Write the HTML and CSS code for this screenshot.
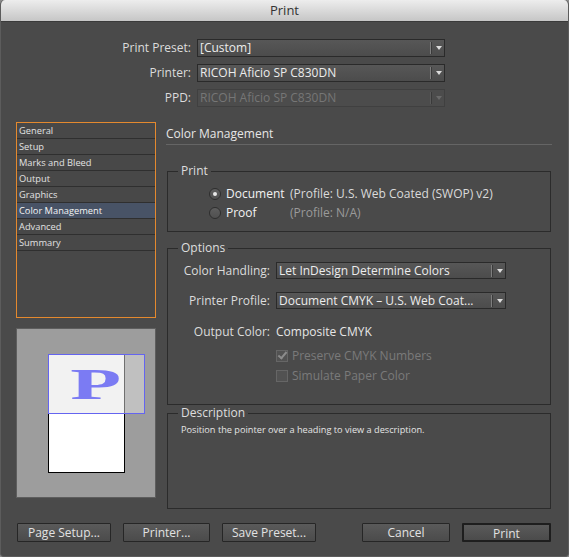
FILE: index.html
```html
<!DOCTYPE html>
<html lang="en">
<head>
    <meta charset="UTF-8">
    <meta name="viewport" content="width=device-width, initial-scale=1.0">
    <title>Print</title>
    <link rel="stylesheet" href="styles.css">
</head>
<body>
    <div class="window">
        <div class="titlebar">Print</div>

        <div class="top">
            <label>Print Preset:</label>
            <div class="select"><span>[Custom]</span><i class="arrow"></i></div>
            <label>Printer:</label>
            <div class="select"><span>RICOH Aficio SP C830DN</span><i class="arrow"></i></div>
            <label>PPD:</label>
            <div class="select disabled"><span>RICOH Aficio SP C830DN</span><i class="arrow"></i></div>
        </div>

        <div class="main">
            <div class="side">
                <ul class="nav">
                    <li>General</li>
                    <li>Setup</li>
                    <li>Marks and Bleed</li>
                    <li>Output</li>
                    <li>Graphics</li>
                    <li class="active">Color Management</li>
                    <li>Advanced</li>
                    <li>Summary</li>
                </ul>
                <div class="preview">
                    <div class="page">
                        <div class="bleed"><span>P</span></div>
                    </div>
                </div>
            </div>

            <div class="panel">
                <h2>Color Management</h2>

                <fieldset class="group">
                    <legend>Print</legend>
                    <div class="print-rows">
                        <div class="radio-row">
                            <span class="radio checked"></span>
                            <span class="radio-label">Document</span>
                            <span class="profile">(Profile: U.S. Web Coated (SWOP) v2)</span>
                        </div>
                        <div class="radio-row">
                            <span class="radio"></span>
                            <span class="radio-label">Proof</span>
                            <span class="profile dim">(Profile: N/A)</span>
                        </div>
                    </div>
                </fieldset>

                <fieldset class="group options">
                    <legend>Options</legend>
                    <div class="opt-rows">
                        <div class="opt-row first">
                            <label>Color Handling:</label>
                            <div class="select wide"><span>Let InDesign Determine Colors</span><i class="arrow"></i></div>
                        </div>
                        <div class="opt-row second">
                            <label>Printer Profile:</label>
                            <div class="select wide"><span>Document CMYK – U.S. Web Coat...</span><i class="arrow"></i></div>
                        </div>
                        <div class="opt-row third">
                            <label>Output Color:</label>
                            <span class="value">Composite CMYK</span>
                        </div>
                        <div class="opt-row check-row fourth">
                            <span></span>
                            <span class="check-item"><span class="checkbox checked"></span>Preserve CMYK Numbers</span>
                        </div>
                        <div class="opt-row check-row">
                            <span></span>
                            <span class="check-item"><span class="checkbox"></span>Simulate Paper Color</span>
                        </div>
                    </div>
                </fieldset>

                <fieldset class="group description">
                    <legend>Description</legend>
                    <p>Position the pointer over a heading to view a description.</p>
                </fieldset>
            </div>
        </div>

        <div class="buttons">
            <button class="btn w94">Page Setup...</button>
            <button class="btn w87">Printer...</button>
            <button class="btn w94">Save Preset...</button>
            <span class="spacer"></span>
            <button class="btn w88">Cancel</button>
            <button class="btn w89 default">Print</button>
        </div>
    </div>
</body>
</html>
```

FILE: styles.css
```css
*{margin:0;padding:0;box-sizing:border-box}
body{
    background-color: #8a8a8a;
    font-family: "Open Sans", sans-serif;
    font-size: 12px;
    color: #dedede;
}
.window{
    width: 569px;
    height: 557px;
    background-color: #4a4a4a;
    border: 1px solid #5c5c5c;
    border-top: none;
    border-radius: 5px 5px 4px 4px;
    overflow: hidden;
}
.titlebar{
    height: 22px;
    line-height: 21px;
    text-align: center;
    font-size: 13px;
    color: #333;
    background: linear-gradient(#ededed, #c6c6c6);
    border-bottom: 1px solid #3a3a3a;
}

/* top selects */
.top{
    display: grid;
    grid-template-columns: 182px 248px;
    grid-auto-rows: 18px;
    column-gap: 6px;
    row-gap: 7px;
    padding: 17px 0 0 8px;
    align-items: center;
}
.top label, .opt-row label{
    text-align: right;
    color: #dcdcdc;
    line-height: 16px;
}
.select{
    display: flex;
    align-items: center;
    height: 18px;
    border: 1px solid #2a2a2a;
    background: linear-gradient(#575757, #4c4c4c);
    color: #ececec;
}
.select span{
    flex: 1;
    padding-left: 2px;
    line-height: 16px;
    white-space: nowrap;
    overflow: hidden;
}
.select .arrow{
    display: flex;
    justify-content: center;
    align-items: center;
    width: 14px;
    height: 12px;
    border-left: 1px solid #7e7e7e;
    box-shadow: inset 1px 0 0 #3a3a3a;
}
.select .arrow::after{
    content: "";
    border-top: 4px solid #dcdcdc;
    border-left: 3.5px solid transparent;
    border-right: 3.5px solid transparent;
    margin-left: 2px;
}
.select.disabled{
    color: #767676;
    background: #4c4c4c;
    border-color: #404040;
}
.select.disabled .arrow{border-left-color: #5a5a5a}
.select.disabled .arrow::after{border-top-color: #6a6a6a}

/* main area */
.main{
    display: flex;
    gap: 10px;
    padding: 15px 0 0 15px;
}
.side{
    width: 140px;
    display: flex;
    flex-direction: column;
    gap: 10px;
}
.nav{
    list-style: none;
    height: 196px;
    border: 1px solid #e4892e;
    background-color: #484848;
}
.nav li{
    height: 16px;
    line-height: 15px;
    padding-left: 2px;
    font-size: 9.3px;
    color: #e2e2e2;
    border-bottom: 1px solid #2f2f2f;
}
.nav li.active{
    background-color: #485366;
    color: #f4f4f4;
}
.preview{
    height: 170px;
    background-color: #9d9d9d;
    border: 1px solid #5e5e5e;
    padding: 25px 0 0 31px;
}
.page{
    position: relative;
    width: 77px;
    height: 119px;
    background-color: #fff;
    border: 1px solid #000;
}
.bleed{
    position: absolute;
    left: -1px;
    top: -1px;
    width: 97px;
    height: 60px;
    border: 1px solid #6464f0;
    background-color: rgba(228, 228, 228, 0.49);
    display: flex;
    justify-content: center;
    align-items: center;
}
.bleed span{
    font-family: "Liberation Serif", serif;
    font-weight: bold;
    font-size: 45px;
    line-height: 1;
    color: #7b7bf3;
    transform: scaleX(1.85);
    margin-right: 2px;
}

/* right panel */
.panel{
    width: 386px;
}
.panel h2{
    font-size: 12px;
    font-weight: normal;
    color: #e6e6e6;
    line-height: 16px;
    margin-top: 4px;
    padding-bottom: 2px;
    border-bottom: 1px solid #656565;
}
.group{
    margin: 0 1px;
    border: 1px solid #2b2b2b;
    padding: 0;
}
.group legend{
    margin-left: 10px;
    padding: 0 3px;
    line-height: 16px;
    color: #dedede;
}
.group:first-of-type{margin-top: 18px}
.print-rows{
    padding: 5px 0 9px 41px;
}
.radio-row{
    display: flex;
    align-items: center;
    height: 19px;
}
.radio{
    width: 12px;
    height: 12px;
    border-radius: 50%;
    border: 1px solid #2e2e2e;
    background: linear-gradient(#5e5e5e, #505050);
    margin-right: 5px;
    display: flex;
    justify-content: center;
    align-items: center;
}
.radio.checked::after{
    content: "";
    width: 4px;
    height: 4px;
    border-radius: 50%;
    background-color: #e8e8e8;
}
.radio-label{
    width: 64px;
    color: #f2f2f2;
}
.profile{color: #dadada}
.profile.dim{color: #9a9a9a}

.options{margin-top: 8px}
.opt-rows{
    padding: 6px 0 19px 0;
}
.opt-row{
    display: grid;
    grid-template-columns: 102px 230px;
    column-gap: 6px;
    align-items: center;
}
.opt-row.first .select, .opt-row.second .select{height: 17px}
.opt-row.second{margin-top: 13px}
.opt-row.third{margin-top: 14px; height: 17px}
.opt-row.fourth{margin-top: 6px}
.check-row{height: 19px; margin-top: 1px}
.value{color: #e6e6e6}
.check-item{
    display: flex;
    align-items: center;
    color: #7a7a7a;
}
.checkbox{
    width: 12px;
    height: 12px;
    border: 1px solid #666;
    background-color: #525252;
    margin-right: 4px;
    display: flex;
    justify-content: center;
    align-items: center;
}
.checkbox.checked::after{
    content: "";
    width: 3px;
    height: 7px;
    border: solid #8c8c8c;
    border-width: 0 2px 2px 0;
    transform: rotate(40deg);
    margin-top: -2px;
}

.description{
    height: 104px;
}
.description p{
    padding: 2px 0 0 13px;
    font-size: 9.2px;
    line-height: 14px;
    color: #e4e4e4;
}

/* bottom buttons */
.buttons{
    display: flex;
    padding: 14px 17px 0 16px;
    gap: 12px;
}
.spacer{flex: 1}
.btn{
    height: 19px;
    font-family: "Open Sans", sans-serif;
    font-size: 12px;
    color: #e2e2e2;
    background: linear-gradient(#5a5a5a, #4b4b4b);
    border: 1px solid #262626;
    border-radius: 1px;
}
.btn.default{
    border: 2px solid #1e1e1e;
}
.w94{width: 94px}
.w87{width: 87px}
.w88{width: 88px}
.w89{width: 89px}
```
